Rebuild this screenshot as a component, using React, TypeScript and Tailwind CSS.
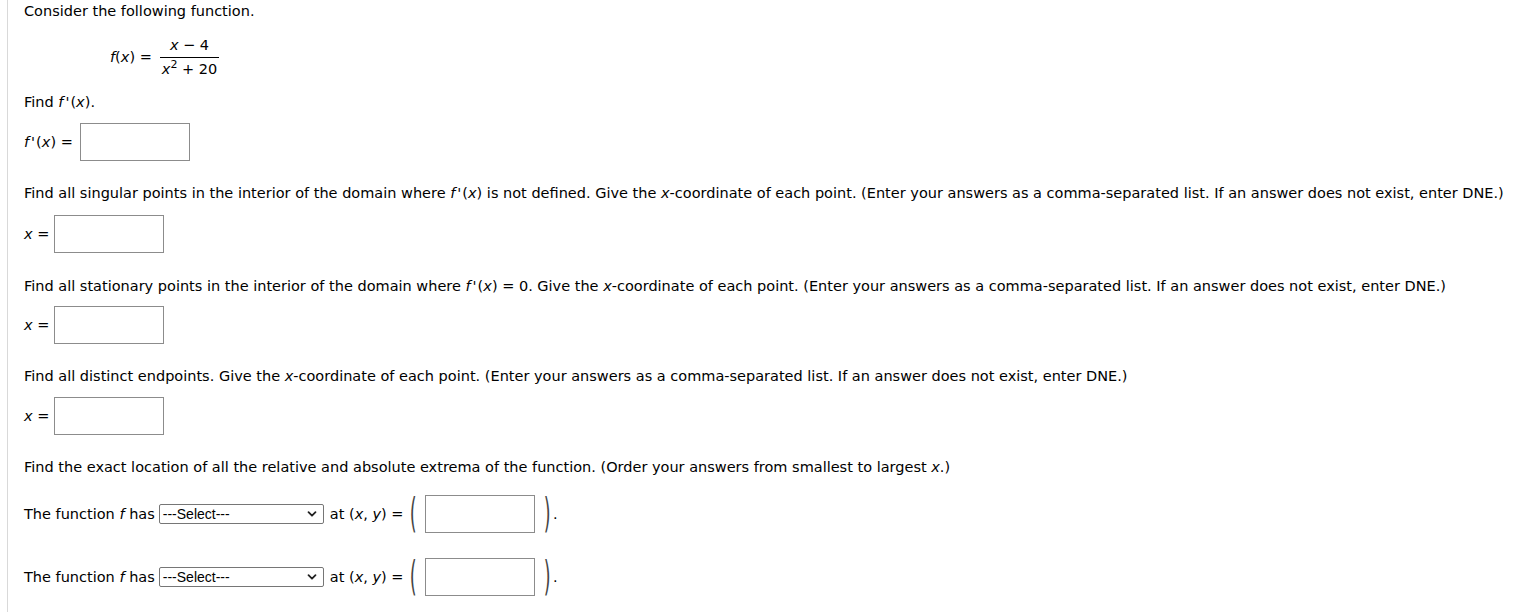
import React from "react";

const font = { fontFamily: '"DejaVu Sans", Verdana, sans-serif' };

const Box = ({ className = "" }: { className?: string }) => (
  <div className={`h-[38px] w-[110px] border border-[#8c8c8c] bg-white ${className}`} />
);

const V = ({ children }: { children: React.ReactNode }) => <i>{children}</i>;

// f'(x) with a prime after the italic f
const FPrime = () => (
  <>
    <V>f</V>
    <span className="ml-[2px] mr-[1px]">'</span>(<V>x</V>)
  </>
);

const AnswerRow = ({ label, gap = "mr-[6px]" }: { label: React.ReactNode; gap?: string }) => (
  <div className="flex items-center h-[38px]">
    <span className={`${gap} whitespace-nowrap`}>{label}</span>
    <Box />
  </div>
);

const SelectBox = () => (
  <div className="flex items-center justify-between h-[20px] w-[165px] border border-[#767676] rounded-[2px] bg-white pl-[3px] pr-[6px] text-[14px] text-black font-['Liberation_Sans',Arial,sans-serif]">
    <span>---Select---</span>
    <svg width="10" height="10" viewBox="0 0 10 10" fill="none">
      <path d="M1.5 3.2 L5 6.7 L8.5 3.2" stroke="#222" strokeWidth="1.8" strokeLinecap="round" strokeLinejoin="round" />
    </svg>
  </div>
);

const Paren = ({ children }: { children: string }) => (
  <span className="inline-block scale-y-[2.6] scale-x-[1.1] text-[16px] leading-none text-[#444]">{children}</span>
);

const ExtremaRow = () => (
  <div className="flex items-center h-[38px] whitespace-nowrap">
    <span className="mr-[4px]">
      The function <V>f</V> has
    </span>
    <SelectBox />
    <span className="ml-[6px]">
      at (<V>x</V>, <V>y</V>) =
    </span>
    <span className="ml-[7px] mr-[8px]">
      <Paren>(</Paren>
    </span>
    <Box />
    <span className="ml-[9px]">
      <Paren>)</Paren>
    </span>
    <span className="ml-[3px]">.</span>
  </div>
);

export default function App() {
  return (
    <div className="min-h-screen bg-white text-[14.5px] leading-[20px] text-black" style={font}>
      <div className="ml-[7px] min-h-screen border-l border-[#d9d9d9] pl-[16px]">
        <div className="pt-[1px]">Consider the following function.</div>

        <div className="mt-[14px] ml-[86px] flex items-center">
          <span className="mr-[8px] whitespace-nowrap">
            <V>f</V>(<V>x</V>) =
          </span>
          <div className="flex flex-col items-center">
            <div className="h-[20px] px-[2px]">
              <V>x</V> − 4
            </div>
            <div className="mt-[2px] h-px w-full bg-black" />
            <div className="h-[20px] px-[2px] pt-[1px]">
              <V>x</V>
              <sup className="text-[11px] relative -top-[6px]">2</sup> + 20
            </div>
          </div>
        </div>

        <div className="mt-[14px]">
          Find <FPrime />.
        </div>

        <div className="mt-[11px]">
          <AnswerRow
            gap="mr-[7px]"
            label={
              <>
                <FPrime /> =
              </>
            }
          />
        </div>

        <div className="mt-[22px]">
          Find all singular points in the interior of the domain where <FPrime /> is not defined. Give the <V>x</V>-coordinate of each point. (Enter your answers as a comma-separated list. If an answer does not exist, enter DNE.)
        </div>
        <div className="mt-[12px]">
          <AnswerRow gap="mr-[5px]" label={<><V>x</V> =</>} />
        </div>

        <div className="mt-[23px]">
          Find all stationary points in the interior of the domain where <FPrime /> = 0. Give the <V>x</V>-coordinate of each point. (Enter your answers as a comma-separated list. If an answer does not exist, enter DNE.)
        </div>
        <div className="mt-[10px]">
          <AnswerRow gap="mr-[5px]" label={<><V>x</V> =</>} />
        </div>

        <div className="mt-[22px]">
          Find all distinct endpoints. Give the <V>x</V>-coordinate of each point. (Enter your answers as a comma-separated list. If an answer does not exist, enter DNE.)
        </div>
        <div className="mt-[11px]">
          <AnswerRow gap="mr-[5px]" label={<><V>x</V> =</>} />
        </div>

        <div className="mt-[22px]">
          Find the exact location of all the relative and absolute extrema of the function. (Order your answers from smallest to largest <V>x</V>.)
        </div>
        <div className="mt-[18px]">
          <ExtremaRow />
        </div>
        <div className="mt-[25px]">
          <ExtremaRow />
        </div>
      </div>
    </div>
  );
}
